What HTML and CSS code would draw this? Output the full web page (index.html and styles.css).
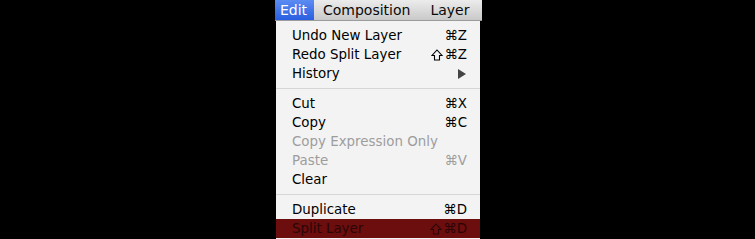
FILE: index.html
```html
<!DOCTYPE html>
<html lang="en">
<head>
    <meta charset="UTF-8">
    <title>Edit Menu</title>
    <link rel="stylesheet" href="styles.css">
</head>
<body>
    <div class="screen">
        <div class="menubar">
            <span class="menubar-item active">Edit</span>
            <span class="menubar-item">Composition</span>
            <span class="menubar-item last">Layer</span>
        </div>
        <div class="menu">
            <div class="item"><span>Undo New Layer</span><span class="key">⌘Z</span></div>
            <div class="item">
                <span>Redo Split Layer</span>
                <span class="key">
                    <svg class="shift" viewBox="0 0 12 12"><path d="M6 1 L11 6.5 H8.5 V11 H3.5 V6.5 H1 Z"/></svg>⌘Z
                </span>
            </div>
            <div class="item"><span>History</span><span class="arrow"></span></div>
            <div class="sep"></div>
            <div class="item"><span>Cut</span><span class="key">⌘X</span></div>
            <div class="item"><span>Copy</span><span class="key">⌘C</span></div>
            <div class="item disabled"><span>Copy Expression Only</span></div>
            <div class="item disabled"><span>Paste</span><span class="key">⌘V</span></div>
            <div class="item"><span>Clear</span></div>
            <div class="sep"></div>
            <div class="item"><span>Duplicate</span><span class="key">⌘D</span></div>
            <div class="item selected">
                <span>Split Layer</span>
                <span class="key">
                    <svg class="shift" viewBox="0 0 12 12"><path d="M6 1 L11 6.5 H8.5 V11 H3.5 V6.5 H1 Z"/></svg>⌘D
                </span>
            </div>
        </div>
    </div>
</body>
</html>
```
FILE: styles.css
```css
* {
    margin: 0;
    padding: 0;
    box-sizing: border-box;
}

body {
    background: #000;
    font-family: "DejaVu Sans", sans-serif;
    overflow: hidden;
}

.screen {
    padding-left: 275px;
}

/* Menu bar */
.menubar {
    display: flex;
    width: 207px;
    height: 21px;
    background: linear-gradient(#ececec, #c9c9c9);
    border-bottom: 1px solid #9c9c9c;
}

.menubar-item {
    padding: 0 7px;
    font-size: 14px;
    line-height: 20px;
    color: #0a0a0a;
}

.menubar-item.active {
    width: 39px;
    padding-left: 5px;
    color: #fff;
    background: linear-gradient(#5c8cf2, #2a5ee0);
}

.menubar-item + .menubar-item {
    margin-left: 2px;
}

.menubar-item.last {
    margin-left: 6px;
}

/* Dropdown */
.menu {
    width: 204px;
    margin-left: 1px;
    padding-top: 5px;
    background: #f3f3f3;
    height: 218px;
}

.item {
    display: flex;
    justify-content: space-between;
    align-items: center;
    height: 19px;
    padding: 0 13px 0 16px;
    font-size: 13.4px;
    color: #000;
}

.item.disabled {
    color: #9d9d9d;
}

.item.selected {
    background: #6c0d0e;
    color: #2a0606;
}

.key {
    display: flex;
    align-items: center;
}

.shift {
    width: 12px;
    height: 12px;
    margin-right: 1px;
    fill: none;
    stroke: currentColor;
    stroke-width: 1.1;
}

.arrow {
    width: 0;
    height: 0;
    margin-right: 1px;
    border-top: 5px solid transparent;
    border-bottom: 5px solid transparent;
    border-left: 8px solid #444;
}

.sep {
    height: 1px;
    margin: 5px 0 5px;
    background: #d6d6d6;
}
```
